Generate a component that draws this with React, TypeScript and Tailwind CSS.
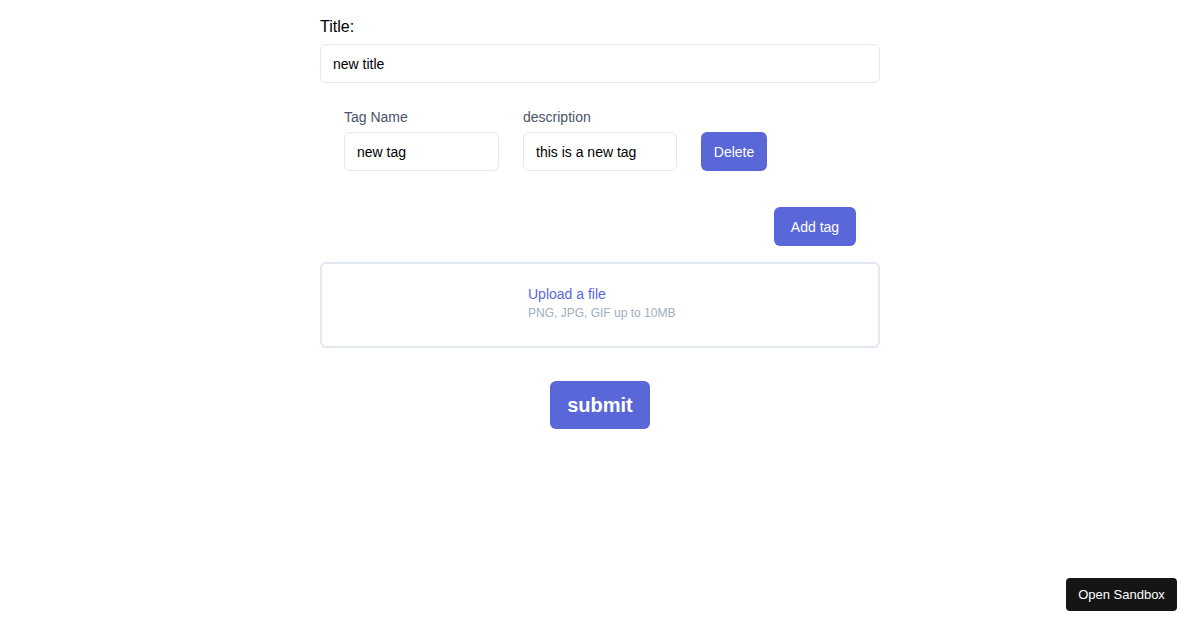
import React, { useState } from "react";

type TTag = {
    name: string;
    description: string;
}

export const App = () => {
    const [title, setTitle] = useState<string>('new title');
    const [tags, setTags] = useState<TTag[]>([{ name: 'new tag', description: 'this is a new tag' }]);

    const onTagChange = (index: number, key: keyof TTag, value: string) => {
        setTags((items) => items.map((item, i) => i === index ? { ...item, [key]: value } : item));
    }

    return (
        <div className="min-h-[630px] bg-white font-['Liberation_Sans',Arial,sans-serif] text-black">
            <form className="w-[560px] mx-auto pt-[17px]" onSubmit={(e) => e.preventDefault()}>
                <label className="block text-base leading-5 mb-[7px]">Title:</label>
                <input
                    type="text"
                    value={title}
                    onChange={(e) => setTitle(e.target.value)}
                    className="block w-full h-[39px] px-3 text-sm border border-[#e2e8f0] rounded-md outline-none"
                />

                <div className="px-6 mt-[26px]">
                    {tags.map((tag, index) => (
                        <div key={index} className="flex items-end gap-6 mb-[36px]">
                            <div className="w-[155px]">
                                <label className="block text-sm leading-4 text-[#4a5568] mb-[7px]">Tag Name</label>
                                <input
                                    type="text"
                                    value={tag.name}
                                    onChange={(e) => onTagChange(index, 'name', e.target.value)}
                                    className="block w-full h-[39px] px-3 text-sm border border-[#e2e8f0] rounded-md outline-none"
                                />
                            </div>
                            <div className="w-[154px]">
                                <label className="block text-sm leading-4 text-[#4a5568] mb-[7px]">description</label>
                                <input
                                    type="text"
                                    value={tag.description}
                                    onChange={(e) => onTagChange(index, 'description', e.target.value)}
                                    className="block w-full h-[39px] px-3 text-sm border border-[#e2e8f0] rounded-md outline-none"
                                />
                            </div>
                            <button
                                type="button"
                                className="h-[39px] w-[66px] text-sm text-white bg-[#5a67d8] rounded-md"
                                onClick={() => setTags((items) => items.filter((_, i) => i !== index))}
                            >
                                Delete
                            </button>
                        </div>
                    ))}
                    <div className="flex justify-end">
                        <button
                            type="button"
                            className="h-[39px] w-[82px] text-sm text-white bg-[#5a67d8] rounded-md"
                            onClick={() => setTags((items) => [...items, { name: '', description: '' }])}
                        >
                            Add tag
                        </button>
                    </div>
                </div>

                <div className="mt-[16px] h-[86px] pt-[20px] border-2 border-[#e2e8f0] rounded-md flex justify-center">
                    <div className="w-[144px] text-left whitespace-nowrap">
                        <div className="text-sm leading-5 text-[#5a67d8]">Upload a file</div>
                        <div className="mt-px text-xs leading-4 text-[#a0aec0]">PNG, JPG, GIF up to 10MB</div>
                    </div>
                </div>

                <div className="flex justify-center mt-[33px]">
                    <button
                        type="submit"
                        className="h-[48px] w-[100px] text-xl font-bold text-white bg-[#5a67d8] rounded-md"
                    >
                        submit
                    </button>
                </div>
            </form>

            <div className="fixed right-[23px] bottom-[19px] h-[33px] w-[111px] flex items-center justify-center rounded bg-[#151515] text-[13px] text-white">
                Open Sandbox
            </div>
        </div>
    );
}

export default App;
